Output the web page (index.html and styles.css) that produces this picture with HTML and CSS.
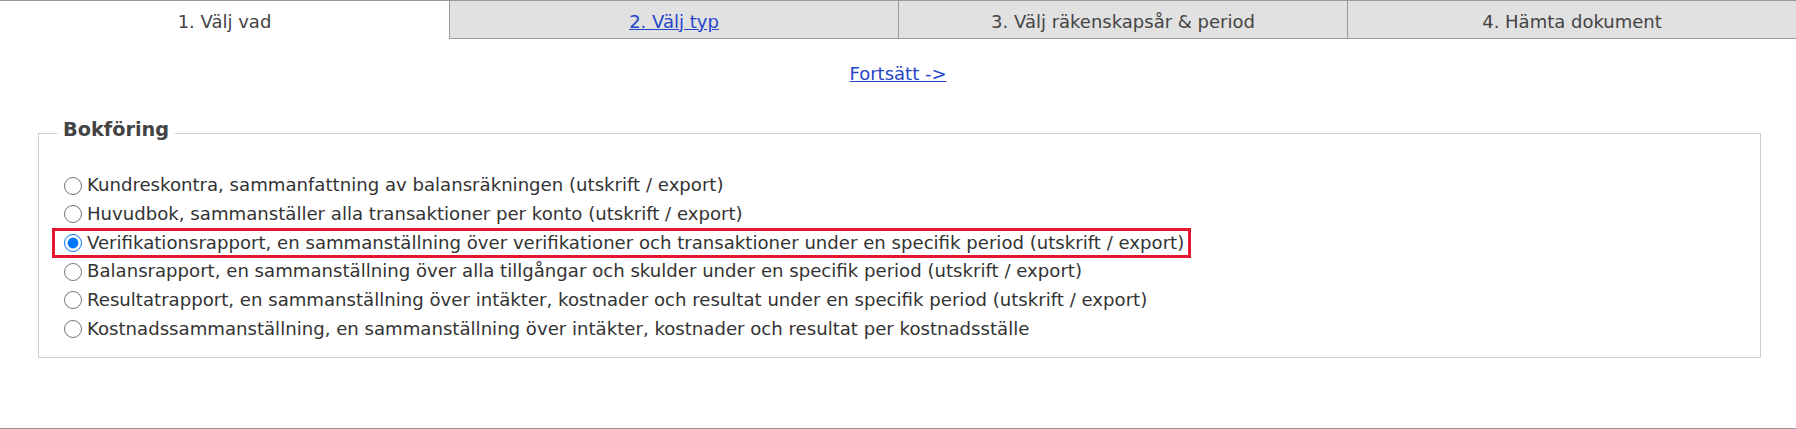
FILE: index.html
```html
<!DOCTYPE html>
<html lang="sv">
<head>
<meta charset="utf-8">
<title>Bokföring</title>
<link rel="stylesheet" href="styles.css">
</head>
<body>
<div class="page">
  <nav class="tabs">
    <div class="tab active"><span>1. Välj vad</span></div>
    <div class="tab"><a href="#">2. Välj typ</a></div>
    <div class="tab"><span>3. Välj räkenskapsår &amp; period</span></div>
    <div class="tab"><span>4. Hämta dokument</span></div>
  </nav>
  <div class="next"><a href="#">Fortsätt -&gt;</a></div>
  <fieldset class="group">
    <legend>Bokföring</legend>
    <label class="row"><input type="radio" name="r">Kundreskontra, sammanfattning av balansräkningen (utskrift / export)</label>
    <label class="row"><input type="radio" name="r">Huvudbok, sammanställer alla transaktioner per konto (utskrift / export)</label>
    <label class="row marked"><input type="radio" name="r" checked>Verifikationsrapport, en sammanställning över verifikationer och transaktioner under en specifik period (utskrift / export)</label>
    <label class="row"><input type="radio" name="r">Balansrapport, en sammanställning över alla tillgångar och skulder under en specifik period (utskrift / export)</label>
    <label class="row"><input type="radio" name="r">Resultatrapport, en sammanställning över intäkter, kostnader och resultat under en specifik period (utskrift / export)</label>
    <label class="row"><input type="radio" name="r">Kostnadssammanställning, en sammanställning över intäkter, kostnader och resultat per kostnadsställe</label>
  </fieldset>
</div>
</body>
</html>
```
FILE: styles.css
```css
html, body {
  margin: 0;
  padding: 0;
  background: #fff;
}
body {
  font-family: "DejaVu Sans", Verdana, sans-serif;
  color: #333;
}
.page {
  height: 429px;
  box-sizing: border-box;
  border-bottom: 1px solid #999;
}
.tabs {
  display: grid;
  grid-template-columns: repeat(4, 1fr);
  border-top: 1px solid #9a9a9a;
}
.tab {
  height: 34px;
  padding-top: 3px;
  display: flex;
  align-items: center;
  justify-content: center;
  font-size: 18px;
  color: #444;
  background: #e1e1e1;
  border-bottom: 1px solid #9a9a9a;
  border-left: 1px solid #9a9a9a;
}
.tab.active {
  background: #fff;
  border-bottom-color: #fff;
  border-left: none;
}
.tab a, .next a {
  color: #2545c9;
  text-decoration: underline;
}
.next {
  margin-top: 25px;
  text-align: center;
  font-size: 18px;
  line-height: 20px;
}
.group {
  margin: 36px 35px 0 38px;
  padding: 24.2px 18px 13.6px 18px;
  border: 1px solid #cccccc;
  min-width: 0;
}
.group legend {
  font-size: 19.3px;
  font-weight: bold;
  line-height: 20px;
  padding: 0 6px 7px 6px;
  color: #444;
}
.row {
  display: flex;
  align-items: center;
  width: max-content;
  height: 28.7px;
  line-height: 28.7px;
  margin-left: 7px;
  font-size: 18.12px;
  color: #333;
  white-space: nowrap;
}
.row input {
  width: 18px;
  height: 18px;
  margin: 0 5px 0 0;
  flex: none;
}
.marked {
  position: relative;
}
.marked::after {
  content: "";
  position: absolute;
  left: -12px;
  right: -7px;
  top: -1px;
  bottom: -1px;
  border: 3px solid #e3172d;
  pointer-events: none;
}
```
